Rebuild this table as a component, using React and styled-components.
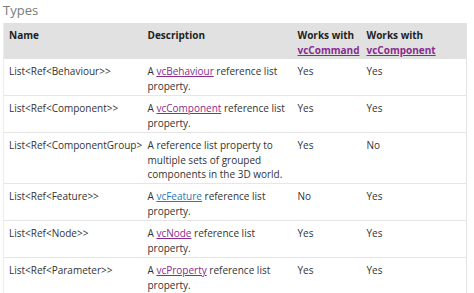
import React from 'react';
import styled, { createGlobalStyle } from 'styled-components';

const GlobalStyle = createGlobalStyle`
  body {
    margin: 0;
    background: #fff;
    font-family: "Open Sans", "Noto Sans", sans-serif;
  }
`;

const Page = styled.div`
  width: 474px;
  height: 293px;
  overflow: hidden;
  padding: 0 0 0 3px;
  box-sizing: border-box;
`;

const Heading = styled.h3`
  margin: 0;
  height: 23px;
  font-size: 13px;
  font-weight: 400;
  line-height: 20px;
  color: #7a7a7a;
`;

const Table = styled.table`
  width: 463px;
  border-collapse: collapse;
  table-layout: fixed;
  font-size: 10px;
  color: #333;
  border-left: 1px solid #ececec;
  border-right: 1px solid #e2e2e2;
`;

const Col = styled.col`
  width: ${(p) => p.$w}px;
`;

const HeadCell = styled.th`
  background: #e1e1e1;
  color: #222;
  font-weight: 700;
  text-align: left;
  vertical-align: top;
  padding: 5px 5px 2px;
  height: 29px;
  line-height: 14.5px;
`;

const Cell = styled.td`
  vertical-align: top;
  padding: 5px 5px 1px;
  line-height: 14.5px;
  border-bottom: 1px solid #e6e6e6;
  height: ${(p) => (p.$tall ? 44 : 30)}px;
`;

const Link = styled.a`
  color: ${(p) => (p.$fresh ? '#2b78b6' : '#8a2b8e')};
  text-decoration: underline;
`;

const rows = [
  { name: 'List<Ref<Behaviour>>', link: 'vcBehaviour', cmd: 'Yes', comp: 'Yes' },
  { name: 'List<Ref<Component>>', link: 'vcComponent', cmd: 'Yes', comp: 'Yes' },
  {
    name: 'List<Ref<ComponentGroup>',
    text: 'A reference list property to multiple sets of grouped components in the 3D world.',
    cmd: 'Yes',
    comp: 'No',
  },
  { name: 'List<Ref<Feature>>', link: 'vcFeature', fresh: true, cmd: 'No', comp: 'Yes' },
  { name: 'List<Ref<Node>>', link: 'vcNode', cmd: 'Yes', comp: 'Yes' },
  { name: 'List<Ref<Parameter>>', link: 'vcProperty', cmd: 'Yes', comp: 'Yes' },
];

export default function App() {
  return (
    <Page>
      <GlobalStyle />
      <Heading>Types</Heading>
      <Table>
        <colgroup>
          <Col $w={139} />
          <Col $w={150} />
          <Col $w={69} />
          <Col $w={105} />
        </colgroup>
        <thead>
          <tr>
            <HeadCell>Name</HeadCell>
            <HeadCell>Description</HeadCell>
            <HeadCell>
              Works with <Link>vcCommand</Link>
            </HeadCell>
            <HeadCell>
              Works with <Link>vcComponent</Link>
            </HeadCell>
          </tr>
        </thead>
        <tbody>
          {rows.map((r) => (
            <tr key={r.name}>
              <Cell $tall={!!r.text}>{r.name}</Cell>
              <Cell $tall={!!r.text}>
                {r.text ? (
                  r.text
                ) : (
                  <>
                    A <Link $fresh={r.fresh}>{r.link}</Link> reference list property.
                  </>
                )}
              </Cell>
              <Cell $tall={!!r.text}>{r.cmd}</Cell>
              <Cell $tall={!!r.text}>{r.comp}</Cell>
            </tr>
          ))}
        </tbody>
      </Table>
    </Page>
  );
}
